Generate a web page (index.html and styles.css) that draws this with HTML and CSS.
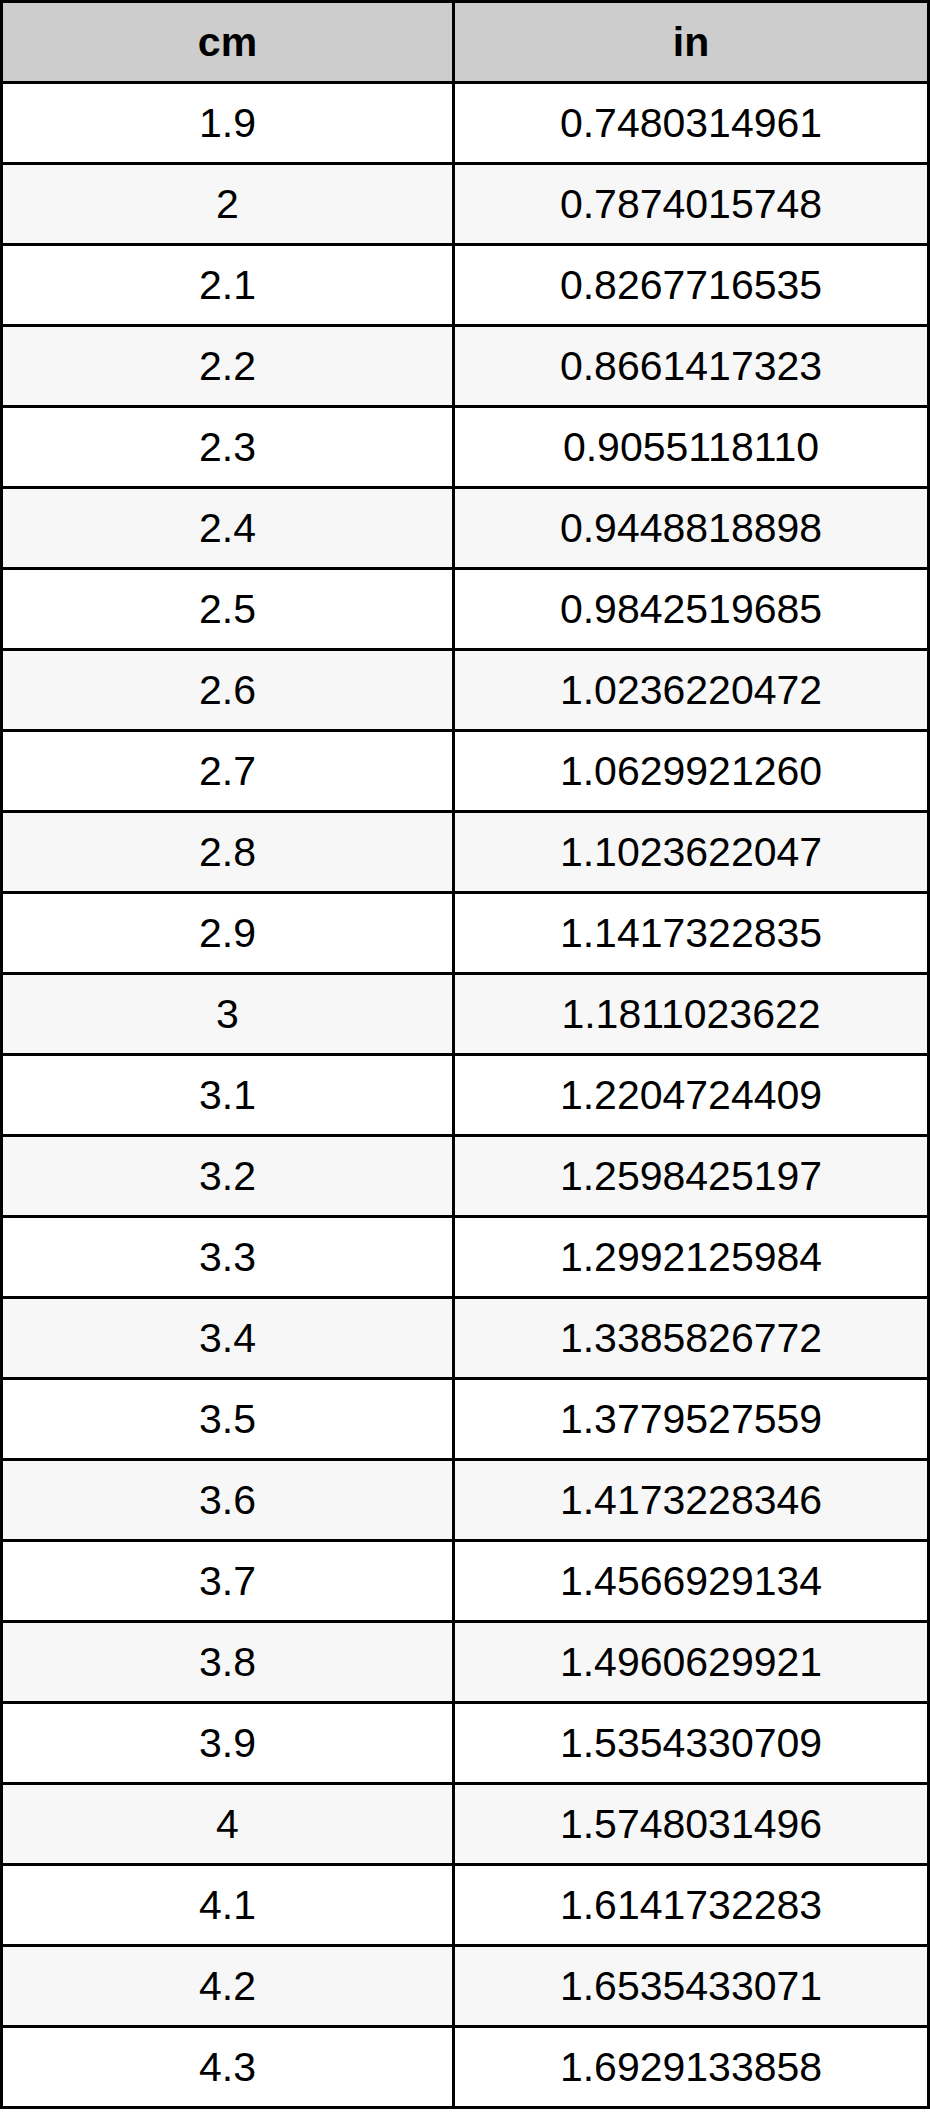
FILE: index.html
```html
<!DOCTYPE html>
<html>
<head>
<meta charset="utf-8">
<link rel="stylesheet" href="styles.css">
</head>
<body>
<div class="table">
  <div class="cell head">cm</div><div class="cell head">in</div>
  <div class="cell">1.9</div><div class="cell">0.7480314961</div>
  <div class="cell alt">2</div><div class="cell alt">0.7874015748</div>
  <div class="cell">2.1</div><div class="cell">0.8267716535</div>
  <div class="cell alt">2.2</div><div class="cell alt">0.8661417323</div>
  <div class="cell">2.3</div><div class="cell">0.9055118110</div>
  <div class="cell alt">2.4</div><div class="cell alt">0.9448818898</div>
  <div class="cell">2.5</div><div class="cell">0.9842519685</div>
  <div class="cell alt">2.6</div><div class="cell alt">1.0236220472</div>
  <div class="cell">2.7</div><div class="cell">1.0629921260</div>
  <div class="cell alt">2.8</div><div class="cell alt">1.1023622047</div>
  <div class="cell">2.9</div><div class="cell">1.1417322835</div>
  <div class="cell alt">3</div><div class="cell alt">1.1811023622</div>
  <div class="cell">3.1</div><div class="cell">1.2204724409</div>
  <div class="cell alt">3.2</div><div class="cell alt">1.2598425197</div>
  <div class="cell">3.3</div><div class="cell">1.2992125984</div>
  <div class="cell alt">3.4</div><div class="cell alt">1.3385826772</div>
  <div class="cell">3.5</div><div class="cell">1.3779527559</div>
  <div class="cell alt">3.6</div><div class="cell alt">1.4173228346</div>
  <div class="cell">3.7</div><div class="cell">1.4566929134</div>
  <div class="cell alt">3.8</div><div class="cell alt">1.4960629921</div>
  <div class="cell">3.9</div><div class="cell">1.5354330709</div>
  <div class="cell alt">4</div><div class="cell alt">1.5748031496</div>
  <div class="cell">4.1</div><div class="cell">1.6141732283</div>
  <div class="cell alt">4.2</div><div class="cell alt">1.6535433071</div>
  <div class="cell">4.3</div><div class="cell">1.6929133858</div>
</div>
</body>
</html>
```

FILE: styles.css
```css
html, body {
  margin: 0;
  padding: 0;
  background: #ffffff;
}

.table {
  display: grid;
  grid-template-columns: 449px 472px;
  grid-auto-rows: 78px;
  gap: 3px;
  padding: 3px;
  width: 930px;
  box-sizing: border-box;
  background: #000000;
}

.cell {
  display: flex;
  align-items: center;
  justify-content: center;
  background: #ffffff;
  color: #000000;
  font-family: "Liberation Sans", Arial, sans-serif;
  font-size: 41px;
}

.cell.alt {
  background: #f7f7f7;
}

.cell.head {
  background: #cdcdcd;
  font-weight: bold;
}
```
